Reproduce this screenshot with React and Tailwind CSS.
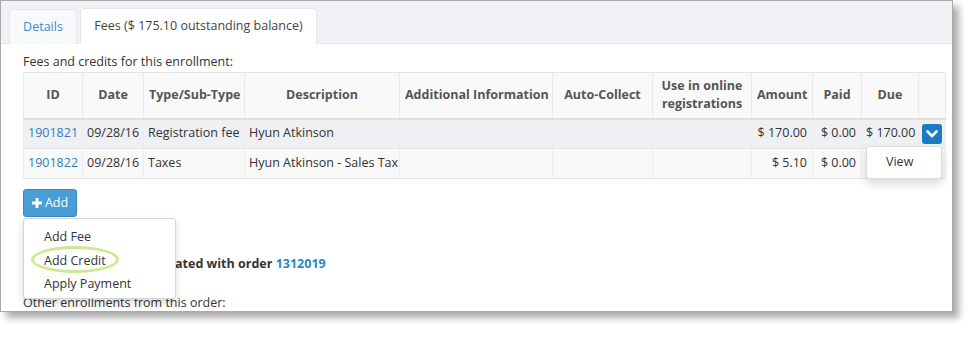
import React from "react";

const cols = [59, 61, 101, 155, 153, 100, 99, 61, 49, 57, 27];

function Plus() {
  return (
    <svg width="10" height="10" viewBox="0 0 10 10" className="inline-block">
      <path d="M3.6 0h2.8v3.6H10v2.8H6.4V10H3.6V6.4H0V3.6h3.6z" fill="white" />
    </svg>
  );
}

function Chevron() {
  return (
    <svg width="12" height="8" viewBox="0 0 12 8">
      <path d="M1.5 1.5 6 6 10.5 1.5" fill="none" stroke="white" strokeWidth="2.6" strokeLinecap="round" strokeLinejoin="round" />
    </svg>
  );
}

export default function App() {
  const th = "border-x border-[#e9e9e9] font-bold text-[#555] text-center align-middle px-[5px] leading-[18px]";
  const td = "border-x border-[#ececec] px-[4px] align-middle whitespace-nowrap";
  return (
    <div className="w-[977px] h-[338px] bg-white relative text-[#333] text-[12.5px]" style={{ fontFamily: '"Open Sans", "Liberation Sans", sans-serif' }}>
      <div className="w-[953px] h-[312px] border border-[#a9a9a9] bg-white relative overflow-hidden shadow-[6px_6px_7px_rgba(0,0,0,0.33)]">
        {/* tabs */}
        <div className="h-[43px] bg-[#f1f2f6] border-b border-[#e3e5ea] flex items-end pl-[8px] gap-[3px]">
          <div className="w-[68px] h-[35px] -mb-px border border-[#e3e5ea] border-b-0 rounded-t-[4px] bg-[#f8f9fb] flex items-center justify-center text-[#3b8dd0]">
            Details
          </div>
          <div className="w-[237px] h-[36px] -mb-px border border-[#e3e5ea] border-b-0 rounded-t-[4px] bg-white flex items-center justify-center text-[#444]">
            Fees ($ 175.10 outstanding balance)
          </div>
        </div>

        <div className="px-[22px] pt-[9px]">
          <div className="leading-[18px] mb-[1px]">Fees and credits for this enrollment:</div>
          <table className="table-fixed border-collapse w-[922px] border border-[#e2e2e2]">
            <colgroup>
              {cols.map((w, i) => (
                <col key={i} style={{ width: w }} />
              ))}
            </colgroup>
            <thead>
              <tr className="h-[46px] bg-[#f9f9f9] border-b-2 border-[#e0e0e0]">
                <th className={th}>ID</th>
                <th className={th}>Date</th>
                <th className={th + " whitespace-nowrap"}>Type/Sub-Type</th>
                <th className={th}>Description</th>
                <th className={th + " whitespace-nowrap px-[2px]"}>Additional Information</th>
                <th className={th}>Auto-Collect</th>
                <th className={th}>Use in online registrations</th>
                <th className={th}>Amount</th>
                <th className={th}>Paid</th>
                <th className={th}>Due</th>
                <th className={th}></th>
              </tr>
            </thead>
            <tbody>
              <tr className="h-[30px] bg-[#eef0f3] border-b border-[#e3e3e3]">
                <td className={td + " text-[#2f7fbf]"}>1901821</td>
                <td className={td}>09/28/16</td>
                <td className={td}>Registration fee</td>
                <td className={td}>Hyun Atkinson</td>
                <td className={td}></td>
                <td className={td}></td>
                <td className={td}></td>
                <td className={td + " text-right pr-[5px]"}>$ 170.00</td>
                <td className={td + " text-right pr-[5px]"}>$ 0.00</td>
                <td className={td + " text-right pr-[6px]"}>$ 170.00</td>
                <td className="border-x border-[#ececec] p-0 align-middle">
                  <div className="flex justify-center">
                    <div className="w-[20px] h-[20px] rounded-[3px] bg-[#1b7cc2] flex items-center justify-center">
                      <Chevron />
                    </div>
                  </div>
                </td>
              </tr>
              <tr className="h-[30px] bg-[#f9f9f9] border-b border-[#e3e3e3]">
                <td className={td + " text-[#2f7fbf]"}>1901822</td>
                <td className={td}>09/28/16</td>
                <td className={td}>Taxes</td>
                <td className={td}>Hyun Atkinson - Sales Tax</td>
                <td className={td}></td>
                <td className={td}></td>
                <td className={td}></td>
                <td className={td + " text-right pr-[5px]"}>$ 5.10</td>
                <td className={td + " text-right pr-[5px]"}>$ 0.00</td>
                <td className={td}></td>
                <td className={td}></td>
              </tr>
            </tbody>
          </table>

          <div className="mt-[10px] w-[54px] h-[28px] bg-[#4a9ed6] border border-[#3a88c2] rounded-[3px] text-white flex items-center justify-center gap-[3px]">
            <Plus />
            <span>Add</span>
          </div>

          <div className="mt-[38px] leading-[18px] font-bold whitespace-nowrap flex items-center">
            <span className="w-[10px] text-[#555]">-</span>
            <span className="text-[#333]">Fees and credits associated with order&nbsp;</span>
            <span className="text-[#2a86c9]">1312019</span>
          </div>
          <div className="mt-[21px] leading-[18px]">Other enrollments from this order:</div>
        </div>

        {/* Add dropdown menu */}
        <div className="absolute left-[22px] top-[217px] w-[153px] h-[81px] bg-white border border-[#d6d6d6] rounded-[3px] shadow-[0_4px_8px_rgba(0,0,0,0.15)] flex flex-col pt-[6px]">
          <div className="h-[23.5px] leading-[23.5px] pl-[20px]">Add Fee</div>
          <div className="h-[23.5px] leading-[23.5px] pl-[20px]">Add Credit</div>
          <div className="h-[23.5px] leading-[23.5px] pl-[20px]">Apply Payment</div>
        </div>
        {/* highlight ellipse */}
        <div className="absolute left-[30px] top-[245px] w-[88px] h-[27px] rounded-[50%] border-[3px] border-[#cbe98f]"></div>

        {/* View dropdown */}
        <div className="absolute left-[865px] top-[145px] w-[76px] h-[33px] bg-white border border-[#dcdcdc] rounded-[3px] shadow-[0_5px_10px_rgba(0,0,0,0.15)] flex items-center pl-[19px] text-[#333]">
          View
        </div>
      </div>
    </div>
  );
}
